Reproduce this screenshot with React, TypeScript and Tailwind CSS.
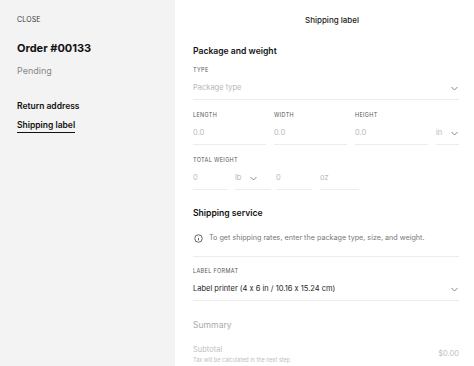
const font = { fontFamily: 'Inter, "Noto Sans", sans-serif' };

function Chevron() {
    return (
        <svg width="7" height="5" viewBox="0 0 7 5" fill="none" stroke="#888" strokeWidth="1" className="shrink-0 mr-[1px] mt-[1px]">
            <polyline points="0.5,1 3.5,4 6.5,1" />
        </svg>
    );
}

function Label({ children }: { children: string }) {
    return <div className="text-[5.5px] uppercase tracking-[0.06em] text-[#555] leading-[6px]">{children}</div>;
}

function Field({ value, width, dark, chevron, inline }: { value: string; width: string; dark?: boolean; chevron?: boolean; inline?: boolean }) {
    return (
        <div className={`${width} min-w-0 h-[27px] pt-[4px] flex items-center ${inline ? 'gap-[9px]' : 'justify-between'} border-b border-[#ececec]`}>
            <span className={`text-[7.5px] whitespace-nowrap ${dark ? 'text-[#222]' : 'text-[#b8b8b8]'}`}>{value}</span>
            {chevron && <Chevron />}
        </div>
    );
}

export default function App() {
    return (
        <div className="w-[474px] h-[366px] flex overflow-hidden bg-white [font-feature-settings:'calt'_0]" style={font}>
            {/* Sidebar */}
            <div className="w-[175px] shrink-0 bg-[#f3f3f3] pl-[17px] pt-[16px] flex flex-col">
                <div className="text-[7px] uppercase text-[#333] leading-[8px] tracking-[0.02em]">Close</div>
                <div className="mt-[17px] text-[11px] font-bold text-[#111] leading-[14px]">Order #00133</div>
                <div className="mt-[10px] text-[9px] text-[#888] leading-[12px]">Pending</div>
                <div className="mt-[23px] text-[8.5px] font-semibold text-[#111] leading-[12px]">Return address</div>
                <div className="mt-[7px] self-start text-[8.5px] font-semibold text-[#111] leading-[12px] pb-[1px] border-b-[1.5px] border-[#111]">
                    Shipping label
                </div>
            </div>

            {/* Main */}
            <div className="flex-1 min-w-0 pl-[18px] pr-[15px] pt-[15px] flex flex-col">
                <div className="text-center text-[8px] font-medium text-[#222] leading-[10px] pl-[12px]">Shipping label</div>

                <div className="mt-[20px] text-[8.6px] font-semibold text-[#111] leading-[12px]">Package and weight</div>

                <div className="mt-[10px]"><Label>Type</Label></div>
                <Field value="Package type" width="w-full" chevron />

                <div className="mt-[12px] flex gap-[8px]">
                    <div className="w-[73px] shrink-0"><Label>Length</Label><Field value="0.0" width="w-full" /></div>
                    <div className="w-[73px] shrink-0"><Label>Width</Label><Field value="0.0" width="w-full" /></div>
                    <div className="w-[73px] shrink-0"><Label>Height</Label><Field value="0.0" width="w-full" /></div>
                    <div className="flex-1 min-w-0 pt-[6px]"><Field value="in" width="w-full" chevron inline /></div>
                </div>

                <div className="mt-[12px]"><Label>Total weight</Label></div>
                <div className="flex">
                    <Field value="0" width="w-[35px]" />
                    <div className="ml-[7px]"><Field value="lb" width="w-[36px]" chevron inline /></div>
                    <div className="ml-[5px]"><Field value="0" width="w-[36px]" /></div>
                    <div className="ml-[8px]"><Field value="oz" width="w-[39px]" /></div>
                </div>

                <div className="mt-[17px] text-[8.6px] font-semibold text-[#111] leading-[12px]">Shipping service</div>

                <div className="mt-[14px] flex items-center gap-[6px] pb-[13px] border-b border-[#ececec]">
                    <svg width="9" height="9" viewBox="0 0 24 24" fill="none" stroke="#444" strokeWidth="2.2" className="ml-[1px] shrink-0">
                        <circle cx="12" cy="12" r="10" />
                        <line x1="12" y1="7" x2="12" y2="7.5" />
                        <line x1="12" y1="10.5" x2="12" y2="17" />
                    </svg>
                    <span className="text-[7.2px] text-[#777] leading-[10px]">To get shipping rates, enter the package type, size, and weight.</span>
                </div>

                <div className="mt-[11px]"><Label>Label format</Label></div>
                <Field value="Label printer (4 x 6 in / 10.16 x 15.24 cm)" width="w-full" dark chevron />

                <div className="mt-[18px] text-[8.6px] text-[#aaa] leading-[12px]">Summary</div>

                <div className="mt-[13px] flex items-center justify-between">
                    <div className="flex flex-col">
                        <span className="text-[7.5px] text-[#c0c0c0] leading-[11px]">Subtotal</span>
                        <span className="mt-[1px] text-[5.5px] text-[#c0c0c0] leading-[8px]">Tax will be calculated in the next step</span>
                    </div>
                    <span className="text-[7.5px] text-[#c0c0c0]">$0.00</span>
                </div>
            </div>
        </div>
    );
}
